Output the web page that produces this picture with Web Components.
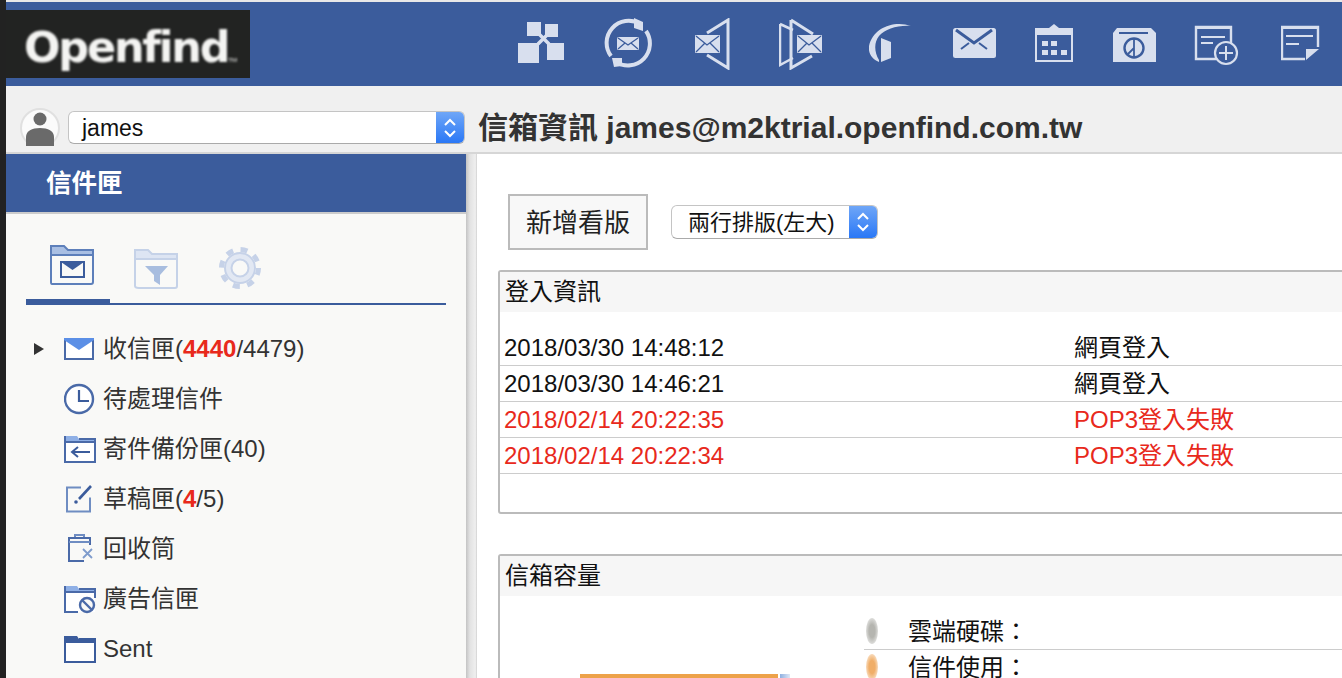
<!DOCTYPE html>
<html lang="zh-Hant">
<head>
<meta charset="utf-8">
<title>Openfind</title>
<style>
  html, body { margin: 0; height: 100%; overflow: hidden; background: #f0f0f0; }
  body { font-family: "Liberation Sans", "Noto Sans CJK TC", sans-serif; }
  .hi { fill: #d8dfee; stroke: none; }
  .hs { fill: none; stroke: #d8dfee; }
  .hb { fill: none; stroke: #3b5c9c; }
  svg { display: block; }
  op-header svg { filter: blur(.45px); }
  op-tree-item svg, op-tab svg { filter: blur(.3px); }
</style>
</head>
<body>

<op-app>
  <op-header slot="header">
    <svg style="margin-left:0" width="46" height="50" viewBox="518 18 46 50">
      <path class="hi" d="M527 22h14v14h-14zM545 24h13v13h-13zM518 43h21v20h-21zM547 43h17v17h-17z"/>
      <path class="hs" stroke-width="3.500" d="M538 33l11 11M549 33l-11 11"/>
    </svg>
    <svg style="margin-left:40px" width="50" height="50" viewBox="604 18 50 50">
      <path class="hs" stroke-width="4" d="M640 24A22 22 0 0 0 611 56"/>
      <path class="hs" stroke-width="4" d="M616 62A22 22 0 0 0 646 31"/>
      <path class="hi" d="M634 18l9 4v9l-9-3zM612 58l10 0v8l-8 1z"/>
      <rect class="hi" x="617" y="37" width="22" height="13" rx="1.500"/>
      <path class="hb" stroke-width="1.300" d="M618 38l10 7 10-7M618 49l7-6M638 49l-7-6"/>
    </svg>
    <svg style="margin-left:40px" width="36" height="52" viewBox="693 17 36 52">
      <path class="hs" stroke-width="3" d="M706 32l21-13v48l-21-13"/>
      <rect class="hi" x="694" y="34" width="25" height="18" rx="1"/>
      <path class="hb" stroke-width="1.300" d="M695 35l11 9 12-9M695 51l9-9M718 51l-9-9"/>
    </svg>
    <svg style="margin-left:49px" width="44" height="52" viewBox="778 18 44 52">
      <path class="hs" stroke-width="2.500" d="M779 24v41l13-7M779 24l13 6"/>
      <path class="hs" stroke-width="3" d="M790 20v48l21-12M790 20l22 14"/>
      <rect class="hi" x="796" y="35" width="25" height="18" rx="1"/>
      <path class="hb" stroke-width="1.300" d="M797 36l11 9 12-9M797 52l9-9M820 52l-9-9"/>
    </svg>
    <svg style="margin-left:46px" width="43" height="50" viewBox="868 18 43 50">
      <path class="hi" d="M910 26C894 20 872 27 868 46C867 53 871 59 878 62L878 60C873 52 873 42 878 36C884 29 897 25 910 26Z"/>
      <path class="hi" d="M880 38l10 4v16l-10 4z"/>
    </svg>
    <svg style="margin-left:41px" width="43" height="50" viewBox="952 18 43 50">
      <rect class="hi" x="952" y="28" width="43" height="30" rx="2.500"/>
      <path class="hb" stroke-width="3" d="M955 30l18 13 18-13"/>
      <path class="hb" stroke-width="2" d="M960 49l8-6M986 49l-8-6"/>
    </svg>
    <svg style="margin-left:38px" width="40" height="50" viewBox="1033 18 40 50">
      <path class="hi" d="M1034 28h14l5-4 5 4h14v7h-38z"/>
      <rect class="hs" stroke-width="2" x="1035" y="29" width="36" height="32"/>
      <path class="hi" d="M1041 41h6v5h-6zM1050 41h6v5h-6zM1041 50h6v5h-6zM1050 50h6v5h-6zM1060 50h6v5h-6z"/>
    </svg>
    <svg style="margin-left:38px" width="44" height="50" viewBox="1111 18 44 50">
      <path class="hi" d="M1116 28h34l5 5v29h-43v-29z"/>
      <path class="hb" stroke-width="2" d="M1118 33h29"/>
      <circle class="hb" cx="1133" cy="48" r="9.500" stroke-width="2.400"/>
      <path class="hb" stroke-width="1.800" d="M1133 39v18M1133 48l-6 6"/>
    </svg>
    <svg style="margin-left:38px" width="46" height="50" viewBox="1193 18 46 50">
      <path class="hs" stroke-width="2.400" d="M1215 59h-20v-32h35v16"/>
      <path class="hi" d="M1194 26h37v3h-37z"/>
      <path class="hs" stroke-width="2" d="M1200 37h24M1200 43h12"/>
      <circle class="hs" stroke-width="2.200" cx="1225" cy="53" r="11"/>
      <path class="hs" stroke-width="2" d="M1225 46v14M1218 53h14"/>
    </svg>
    <svg style="margin-left:41px" width="39" height="50" viewBox="1280 18 39 50">
      <path class="hs" stroke-width="2.400" d="M1304 59h-23v-32h36v20"/>
      <path class="hi" d="M1281 26h37v3h-37zM1305 60v-11h13z"/>
      <path class="hs" stroke-width="2" d="M1285 36h27M1285 44h13"/>
    </svg>
  </op-header>

  <op-subbar slot="subbar">
    <svg slot="avatar" width="40" height="38" viewBox="20 108 40 38" style="filter:blur(.4px)">
      <circle cx="40" cy="128" r="19" fill="#fbfbfb" stroke="#e0e0e0" stroke-width="2"/>
      <circle cx="40" cy="119" r="6.500" fill="#6a6a6a"/>
      <path d="M26 146v-9c0-6 6-9 14-9s14 3 14 9v9z" fill="#6a6a6a"/>
    </svg>
    <op-select slot="select" style="width:397px;font-size:23px;--pad:13px">james</op-select>
    信箱資訊 james@m2ktrial.openfind.com.tw
  </op-subbar>

  <op-sidebar slot="sidebar">
    <span slot="title">信件匣</span>
    <op-tab slot="tabs" active>
      <svg width="46" height="42" viewBox="49 243 46 42">
        <path d="M51 254v-9h13l4 4h25v5z" fill="#a9bfe3"/>
        <path d="M51 245h13l4 4h25v32q0 2-2 2h-39q-1 0-1-2zM51 254h42" fill="none" stroke="#5d7fba" stroke-width="2"/>
        <rect x="61" y="261" width="23" height="15" fill="none" stroke="#3b5c9c" stroke-width="2"/>
        <path d="M61 261h23l-11.500 8z" fill="#3b5c9c"/>
      </svg>
    </op-tab>
    <op-tab slot="tabs">
      <svg width="46" height="42" viewBox="133 247 46 42">
        <path d="M135 258v-9h13l4 4h25v5z" fill="#dde5f3"/>
        <path d="M135 249h13l4 4h25v32q0 2-2 2h-36q-4 0-4-2zM135 258h42" fill="none" stroke="#c5d2e8" stroke-width="2"/>
        <path d="M145 265h23l-8 9v10l-6-4v-6z" fill="#a8bddf"/>
      </svg>
    </op-tab>
    <op-tab slot="tabs">
      <svg width="46" height="46" viewBox="217 244 46 46">
        <circle cx="240" cy="267" r="18.500" fill="none" stroke="#c6d2e8" stroke-width="5" stroke-dasharray="7 7.530"/>
        <circle cx="240" cy="267" r="15" fill="#e2e8f3" stroke="#c6d2e8" stroke-width="2"/>
        <circle cx="240" cy="267" r="8.500" fill="#f9f9f7" stroke="#c6d2e8" stroke-width="2"/>
      </svg>
    </op-tab>

    <op-tree-item branch>
      <svg slot="icon" width="32" height="24" viewBox="64 337 32 24">
        <rect x="65" y="339" width="28" height="20" fill="#fff" stroke="#4a6aa8" stroke-width="2"/>
        <path d="M64 338h30v2l-15 10-15-10z" fill="#5b8fe6"/>
      </svg>
      收信匣(<b>4440</b>/4479)
    </op-tree-item>
    <op-tree-item>
      <svg slot="icon" width="32" height="32" viewBox="64 383 32 32">
        <circle cx="79" cy="399" r="14" fill="#fff" stroke="#4a6aa8" stroke-width="2.400"/>
        <path d="M79 390v11h10" fill="none" stroke="#3b5c9c" stroke-width="2.200"/>
      </svg>
      待處理信件
    </op-tree-item>
    <op-tree-item>
      <svg slot="icon" width="32" height="30" viewBox="64 433 32 30">
        <rect x="65" y="438" width="30" height="23" fill="#fff"/>
        <path d="M65 441v-6h12l2 3h16v3z" fill="#8fb0e6"/>
        <path d="M65 435v26h30v-23h-16M65 441h30" fill="none" stroke="#4a6aa8" stroke-width="2"/>
        <path d="M72 451h18M78 446l-6 5 6 5" fill="none" stroke="#3b5c9c" stroke-width="2"/>
      </svg>
      寄件備份匣(40)
    </op-tree-item>
    <op-tree-item>
      <svg slot="icon" width="32" height="30" viewBox="64 484 32 30">
        <path d="M81 487.500h-14v24h23v-14" fill="none" stroke="#6f8dc2" stroke-width="2"/>
        <path d="M91 486l-12 13" fill="none" stroke="#3b5c9c" stroke-width="2.600"/>
        <circle cx="76" cy="502" r="1.800" fill="#3b5c9c"/>
      </svg>
      草稿匣(<b>4</b>/5)
    </op-tree-item>
    <op-tree-item>
      <svg slot="icon" width="32" height="30" viewBox="64 534 32 30">
        <path d="M90 545v-7h-21v23h15" fill="none" stroke="#4a6aa8" stroke-width="2"/>
        <path d="M75 537v-2h9v2M69 542h21" fill="none" stroke="#6f8dc2" stroke-width="2"/>
        <path d="M83 549l9 9M92 549l-9 9" fill="none" stroke="#7f9ccc" stroke-width="1.800"/>
      </svg>
      回收筒
    </op-tree-item>
    <op-tree-item>
      <svg slot="icon" width="32" height="30" viewBox="64 583 32 30">
        <rect x="65" y="588" width="30" height="23" fill="#fff"/>
        <path d="M65 591v-6h12l2 3h16v3z" fill="#8fb0e6"/>
        <path d="M78 611h-13v-26M65 591h30v6M79 588h16v3" fill="none" stroke="#4a6aa8" stroke-width="2"/>
        <circle cx="87" cy="604" r="7" fill="#f9f9f7" stroke="#4a6aa8" stroke-width="2.400"/>
        <path d="M82 599l10 10" stroke="#4a6aa8" stroke-width="2.400"/>
      </svg>
      廣告信匣
    </op-tree-item>
    <op-tree-item>
      <svg slot="icon" width="32" height="30" viewBox="64 633 32 30">
        <rect x="65" y="638" width="30" height="23" fill="#fff"/>
        <path d="M65 641v-6h12l2 3h16v3z" fill="#3b5c9c"/>
        <path d="M65 635v26h30v-23h-16M65 641h30" fill="none" stroke="#3b5c9c" stroke-width="2"/>
      </svg>
      Sent
    </op-tree-item>
  </op-sidebar>

  <op-main slot="main">
    <op-button slot="tools">新增看版</op-button>
    <op-select slot="tools" style="width:207px;height:34px;font-size:22px;--pad:16px">兩行排版(左大)</op-select>

    <op-panel title-text="登入資訊">
      <op-login-row time="2018/03/30 14:48:12" kind="網頁登入"></op-login-row>
      <op-login-row time="2018/03/30 14:46:21" kind="網頁登入"></op-login-row>
      <op-login-row time="2018/02/14 20:22:35" kind="POP3登入失敗" failed></op-login-row>
      <op-login-row time="2018/02/14 20:22:34" kind="POP3登入失敗" failed></op-login-row>
    </op-panel>

    <op-panel title-text="信箱容量" quota>
      <op-quota>
        <op-legend color="#b5b5b0">雲端硬碟：</op-legend>
        <op-legend color="#f0ae68">信件使用：</op-legend>
      </op-quota>
    </op-panel>
  </op-main>
</op-app>

<script>
  function reg(name, html, extra) {
    const tpl = document.createElement('template')
    tpl.innerHTML = html
    customElements.define(name, class extends HTMLElement {
      constructor() {
        super()
        this.attachShadow({ mode: 'open' }).appendChild(tpl.content.cloneNode(true))
      }
      connectedCallback() {
        if (extra) extra(this, this.shadowRoot)
      }
    })
  }

  reg('op-app', `
    <style>
      :host { display: flex; height: 678px; overflow: hidden; }
      .strip { width: 6px; flex: none; background: #222; }
      .col { flex: 1; min-width: 0; display: flex; flex-direction: column; }
      .line { height: 2px; flex: none; background: #e8e8e8; }
      .work { flex: 1; min-height: 0; display: flex; border-top: 2px solid #d6d6d6; }
      .gutter { width: 11px; flex: none; background: linear-gradient(90deg, #c4c4c4, #e2e2e2 35%, #efefef 85%, #d0d0d0); }
    </style>
    <div class="strip"></div>
    <div class="col">
      <div class="line"></div>
      <slot name="header"></slot>
      <slot name="subbar"></slot>
      <div class="work">
        <slot name="sidebar"></slot>
        <div class="gutter"></div>
        <slot name="main"></slot>
      </div>
    </div>`)

  reg('op-header', `
    <style>
      :host { display: flex; height: 84px; flex: none; background: #3b5c9c; align-items: flex-start; }
      .logo { width: 244px; height: 68px; margin-top: 8px; flex: none; background: #222322; color: #f4f4f2;
        box-sizing: border-box; padding: 3px 0 0 18px; font: bold 43px/68px "DejaVu Sans", sans-serif; letter-spacing: -2.200px; white-space: nowrap; overflow: hidden; }
      .logo span { display: inline-block; filter: blur(.8px); }
      .logo small { font: 6px "Liberation Sans", sans-serif; letter-spacing: 0; }
      .icons { display: flex; align-items: flex-start; margin: 16px 0 0 268px; }
    </style>
    <div class="logo"><span>Openfind<small>TM</small></span></div>
    <div class="icons"><slot></slot></div>`)

  reg('op-subbar', `
    <style>
      :host { display: flex; height: 66px; flex: none; background: #f0f0f0; }
      .avatar { margin: 22px 0 0 14px; width: 40px; height: 38px; flex: none; }
      .sel { margin: 25px 0 0 8px; width: 397px; flex: none; }
      .title { margin: 22px 0 0 13px; font-size: 30px; line-height: 40px; font-weight: bold; color: #333; white-space: nowrap; }
    </style>
    <div class="avatar"><slot name="avatar"></slot></div>
    <div class="sel"><slot name="select"></slot></div>
    <div class="title"><slot></slot></div>`)

  reg('op-sidebar', `
    <style>
      :host { display: flex; flex-direction: column; width: 460px; flex: none; background: #f9f9f7; }
      .head { height: 58px; flex: none; background: #3b5c9c; border-bottom: 2px solid #ccc; color: #fff;
        font-size: 25.500px; font-weight: bold; line-height: 58px; padding-left: 40px; }
      .tabs { display: flex; margin: 27px 20px 0; height: 62px; border-bottom: 2px solid #3b5c9c; }
      .tree { margin-top: 19px; }
    </style>
    <div class="head"><slot name="title"></slot></div>
    <div class="tabs"><slot name="tabs"></slot></div>
    <div class="tree"><slot></slot></div>`)

  reg('op-tab', `
    <style>
      :host { display: block; width: 84px; box-sizing: border-box; position: relative; }
      :host([active])::after { content: ""; position: absolute; left: 0; right: 0; bottom: -2px; height: 6px; background: #3b5c9c; }
    </style>
    <slot></slot>`, (el) => {
      // icons hang at slightly different heights in the reference
      const box = el.querySelector('svg').getAttribute('viewBox').split(' ')
      el.style.paddingTop = (parseInt(box[1]) - 240) + 'px'
      el.style.paddingLeft = (parseInt(box[0]) - 26 - 84 * [...el.parentNode.querySelectorAll('op-tab')].indexOf(el)) + 'px'
    })

  reg('op-tree-item', `
    <style>
      :host { display: flex; align-items: center; height: 50px; padding-left: 28px; font-size: 24px; color: #333; white-space: nowrap; }
      .arrow { width: 30px; flex: none; }
      :host([branch]) .arrow::before { content: ""; display: block; width: 0; height: 0; border-left: 10px solid #333;
        border-top: 6.500px solid transparent; border-bottom: 6.500px solid transparent; }
      .icon { width: 32px; flex: none; margin-right: 7px; }
      .text { height: 30px; line-height: 29px; margin-top: -1px; }
      ::slotted(b) { color: #e8291c; }
    </style>
    <div class="arrow"></div>
    <div class="icon"><slot name="icon"></slot></div>
    <div class="text"><slot></slot></div>`)

  reg('op-select', `
    <style>
      :host { display: flex; height: 33px; box-sizing: border-box; background: #fff; border: 1px solid #c4c4c4; border-bottom-color: #aaa;
        border-radius: 6px; overflow: hidden; color: #111; line-height: 31px; white-space: nowrap; }
      .t { flex: 1; padding-left: var(--pad, 14px); padding-top: 1px; }
      .b { width: 28px; flex: none; background: linear-gradient(#6fa6f7, #2a78f6); display: flex; align-items: center; justify-content: center; }
    </style>
    <div class="t"><slot></slot></div>
    <div class="b"><svg width="14" height="22" viewBox="0 0 14 22"><path d="M2 8l5-5 5 5M2 14l5 5 5-5" fill="none" stroke="#fff" stroke-width="2"/></svg></div>`)

  reg('op-main', `
    <style>
      :host { display: block; flex: 1; min-width: 0; overflow: hidden; background: #fff; box-sizing: border-box; padding: 40px 0 0 21px; }
      .tools { display: flex; align-items: center; gap: 23px; margin: 0 0 20px 10px; }
      .wide { margin-right: -12px; }
    </style>
    <div class="tools"><slot name="tools"></slot></div>
    <div class="wide"><slot></slot></div>`)

  reg('op-button', `
    <style>
      :host { display: block; width: 140px; height: 56px; box-sizing: border-box; border: 2px solid #bbb; background: #f8f8f8;
        font-size: 26px; line-height: 54px; text-align: center; color: #222; }
    </style>
    <slot></slot>`)

  reg('op-panel', `
    <style>
      :host { display: block; border: 2px solid #bbb; border-radius: 3px; margin-bottom: 40px; color: #111; }
      .title { height: 40px; background: #f6f6f6; font-size: 24px; line-height: 40px; padding-left: 5px; }
      .body { padding: 18px 0 38px; }
      :host([quota]) .body { padding: 0; height: 200px; }
    </style>
    <div class="title"></div>
    <div class="body"><slot></slot></div>`, (el, root) => {
      root.querySelector('.title').textContent = el.getAttribute('title-text')
    })

  reg('op-login-row', `
    <style>
      :host { display: grid; grid-template-columns: 570px 1fr; height: 36px; box-sizing: border-box; border-bottom: 1px solid #ccc;
        padding-left: 4px; font-size: 24px; line-height: 35px; color: #111; white-space: nowrap; }
      :host([failed]) { color: #e8291c; }
    </style>
    <div class="a"></div><div class="b"></div>`, (el, root) => {
      root.querySelector('.a').textContent = el.getAttribute('time')
      root.querySelector('.b').textContent = el.getAttribute('kind')
    })

  reg('op-quota', `
    <style>
      :host { display: flex; }
      .chart { width: 364px; flex: none; box-sizing: border-box; padding: 78px 0 0 80px; display: flex; gap: 2px; align-items: flex-start; }
      .bar { height: 40px; background: #eda24a; width: 198px; }
      .rest { height: 40px; width: 10px; background: linear-gradient(90deg, #8fb0e0, #dfe8f6); }
      .legend { flex: 1; padding-top: 18px; }
    </style>
    <div class="chart"><div class="bar"></div><div class="rest"></div></div>
    <div class="legend"><slot></slot></div>`)

  reg('op-legend', `
    <style>
      :host { display: flex; align-items: flex-start; height: 36px; box-sizing: border-box; border-bottom: 1px solid #ccc; font-size: 24px; line-height: 35px; color: #111; white-space: nowrap; }
      .dot { width: 12px; height: 26px; margin: 4px 30px 0 2px; border-radius: 50%; flex: none; }
    </style>
    <div class="dot"></div><div><slot></slot></div>`, (el, root) => {
      const c = el.getAttribute('color')
      root.querySelector('.dot').style.background = 'radial-gradient(ellipse at center, ' + c + ' 35%, #fff 100%)'
    })
</script>
</body>
</html>
